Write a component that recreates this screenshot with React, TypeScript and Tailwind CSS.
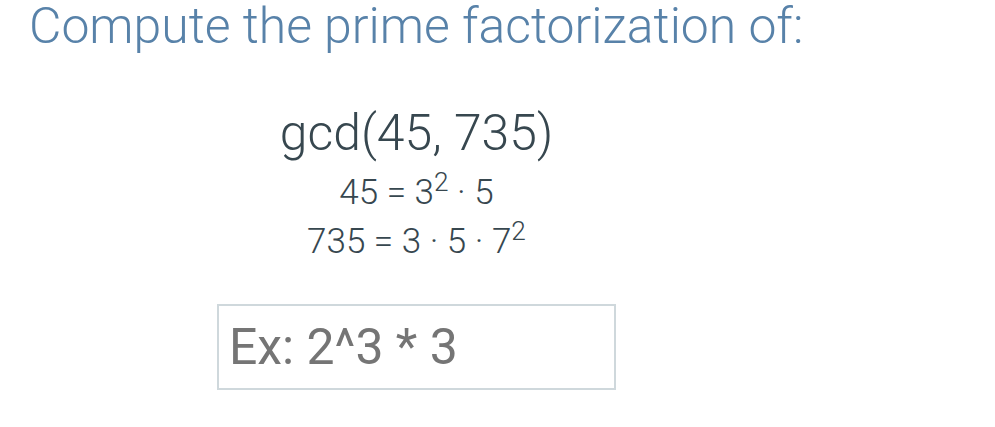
const factorizations = [
  { value: 45, terms: [{ base: 3, exp: 2 }, { base: 5 }] },
  { value: 735, terms: [{ base: 3 }, { base: 5 }, { base: 7, exp: 2 }] },
];

function Factorization({ value, terms }: (typeof factorizations)[number]) {
  return (
    <p className="h-[49px] text-[35px] leading-[49px] whitespace-nowrap">
      {value} ={" "}
      {terms.map((t, i) => (
        <span key={t.base}>
          {i > 0 && " · "}
          {t.base}
          {"exp" in t && <sup className="text-[26.25px] leading-[0]">{t.exp}</sup>}
        </span>
      ))}
    </p>
  );
}

export default function App() {
  return (
    <main className="h-[427px] bg-white font-['Roboto',sans-serif] font-light text-[#37474f]">
      <h1 className="pl-[29px] text-[49.9px] leading-[52px] whitespace-nowrap text-[#5882a9]">
        Compute the prime factorization of:
      </h1>
      <section className="ml-[217px] flex w-[399px] flex-col items-center pt-[49px]">
        <h2 className="text-[49.9px] leading-[64px]">gcd(45, 735)</h2>
        <div className="flex flex-col items-center pt-[3px]">
          {factorizations.map((f) => (
            <Factorization key={f.value} {...f} />
          ))}
        </div>
        <input
          type="text"
          placeholder="Ex: 2^3 * 3"
          className="mt-[38px] h-[86px] w-full border-2 border-[#cfd8dc] bg-white px-[10px] text-[49.9px] font-normal placeholder:text-[#757575]"
        />
      </section>
    </main>
  );
}
